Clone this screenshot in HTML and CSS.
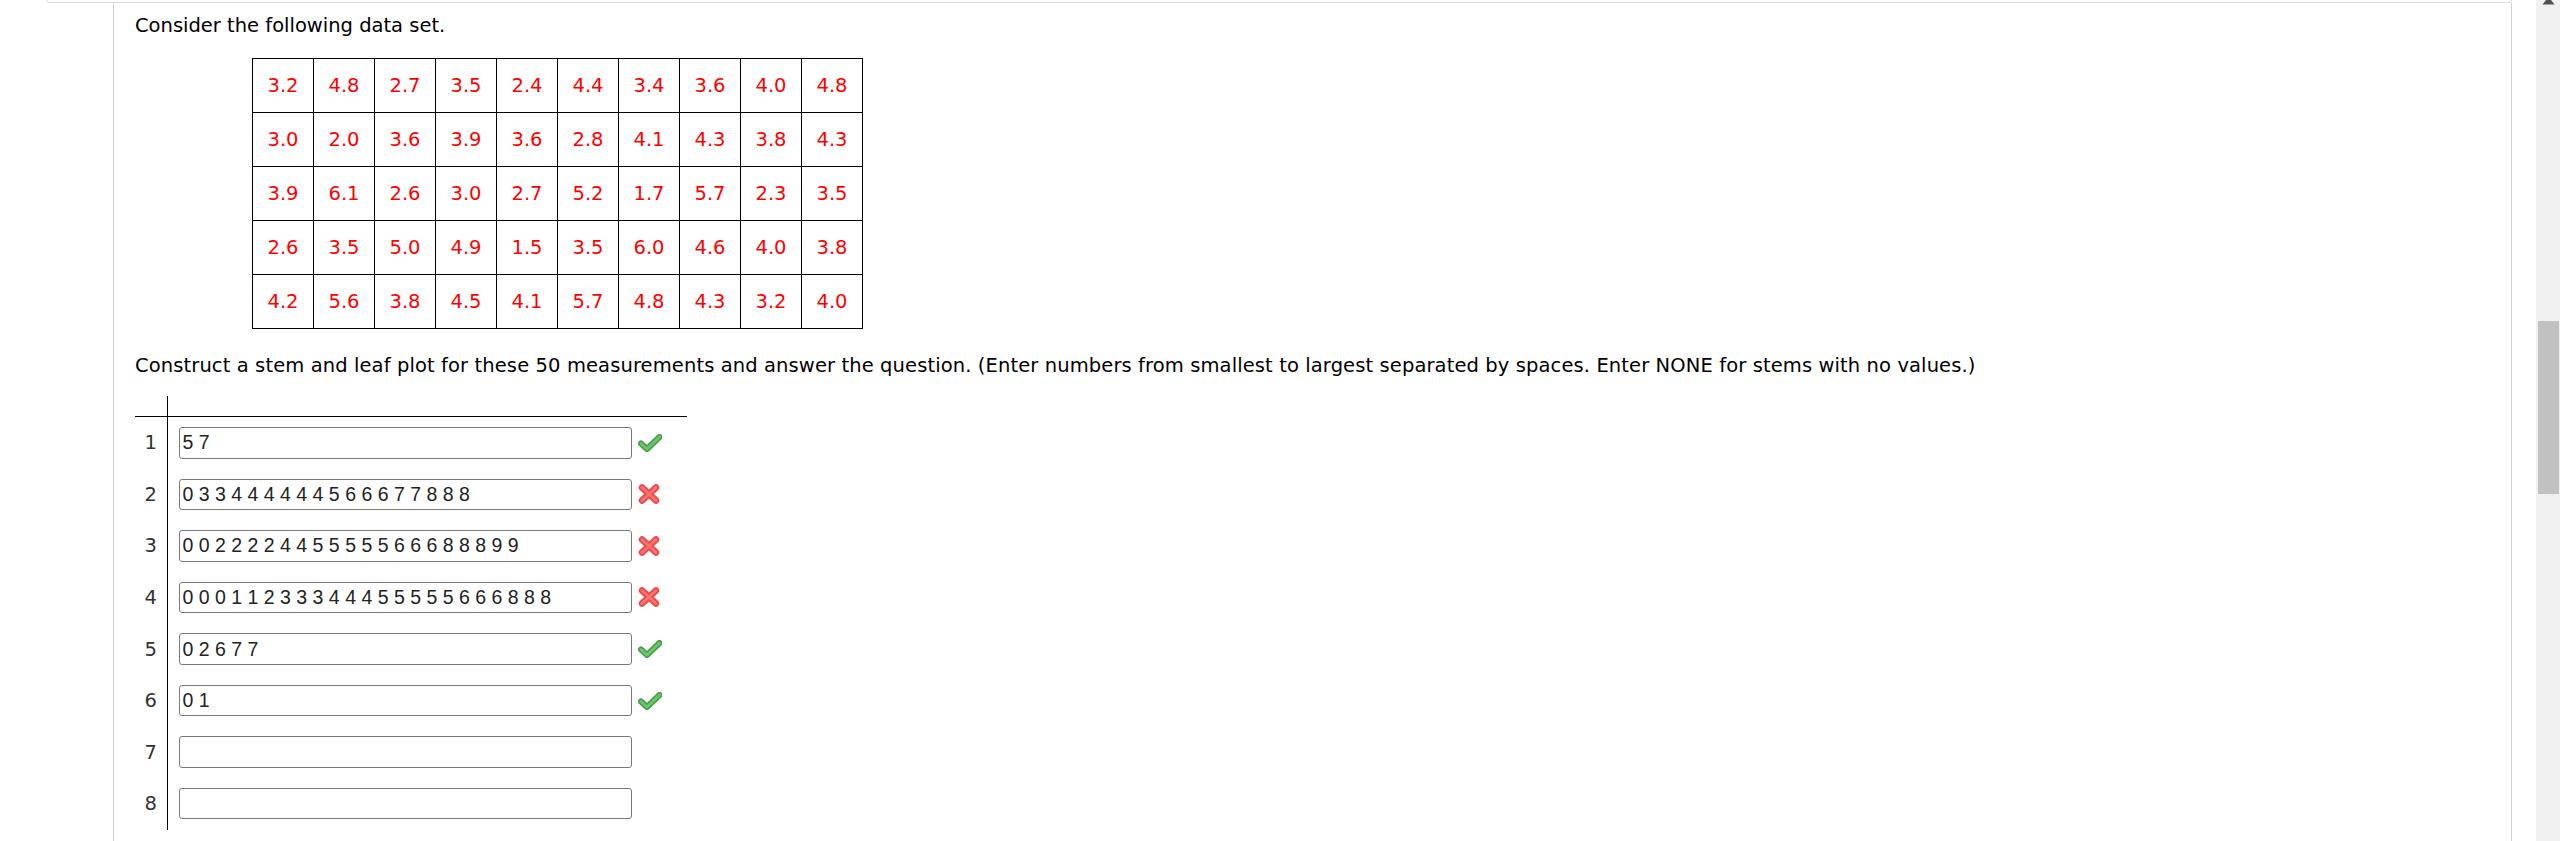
FILE: index.html
```html
<!DOCTYPE html>
<html lang="en">
<head>
<meta charset="utf-8">
<title>Stem and leaf plot</title>
<link rel="stylesheet" href="styles.css">
</head>
<body>
<div class="page">
  <div class="prev-box"></div>
  <div class="question">
    <p class="intro">Consider the following data set.</p>
    <table class="data">
      <tr><td>3.2</td><td>4.8</td><td>2.7</td><td>3.5</td><td>2.4</td><td>4.4</td><td>3.4</td><td>3.6</td><td>4.0</td><td>4.8</td></tr>
      <tr><td>3.0</td><td>2.0</td><td>3.6</td><td>3.9</td><td>3.6</td><td>2.8</td><td>4.1</td><td>4.3</td><td>3.8</td><td>4.3</td></tr>
      <tr><td>3.9</td><td>6.1</td><td>2.6</td><td>3.0</td><td>2.7</td><td>5.2</td><td>1.7</td><td>5.7</td><td>2.3</td><td>3.5</td></tr>
      <tr><td>2.6</td><td>3.5</td><td>5.0</td><td>4.9</td><td>1.5</td><td>3.5</td><td>6.0</td><td>4.6</td><td>4.0</td><td>3.8</td></tr>
      <tr><td>4.2</td><td>5.6</td><td>3.8</td><td>4.5</td><td>4.1</td><td>5.7</td><td>4.8</td><td>4.3</td><td>3.2</td><td>4.0</td></tr>
    </table>
    <p class="instr">Construct a stem and leaf plot for these 50 measurements and answer the question. (Enter numbers from smallest to largest separated by spaces. Enter NONE for stems with no values.)</p>
    <div class="plot">
      <div class="plot-head"><div class="stem"></div><div class="leaf"></div></div>
      <div class="plot-row"><div class="stem">1</div><div class="leaf"><input class="leaf-input" type="text" value="5 7" readonly><svg class="mark" width="24" height="18" viewBox="0 0 24 18"><path d="M3 9.5 L9 15 L21.5 3" class="ok-out"/><path d="M3 9.5 L9 15 L21.5 3" class="ok-in"/></svg></div></div>
      <div class="plot-row"><div class="stem">2</div><div class="leaf"><input class="leaf-input" type="text" value="0 3 3 4 4 4 4 4 4 5 6 6 6 7 7 8 8 8" readonly><svg class="mark" width="22" height="20" viewBox="0 0 22 20"><path d="M4 3.5 L18 16.5 M18 3.5 L4 16.5" class="no-out"/><path d="M4 3.5 L18 16.5 M18 3.5 L4 16.5" class="no-in"/></svg></div></div>
      <div class="plot-row"><div class="stem">3</div><div class="leaf"><input class="leaf-input" type="text" value="0 0 2 2 2 2 4 4 5 5 5 5 5 6 6 6 8 8 8 9 9" readonly><svg class="mark" width="22" height="20" viewBox="0 0 22 20"><path d="M4 3.5 L18 16.5 M18 3.5 L4 16.5" class="no-out"/><path d="M4 3.5 L18 16.5 M18 3.5 L4 16.5" class="no-in"/></svg></div></div>
      <div class="plot-row"><div class="stem">4</div><div class="leaf"><input class="leaf-input" type="text" value="0 0 0 1 1 2 3 3 3 4 4 4 5 5 5 5 5 6 6 6 8 8 8" readonly><svg class="mark" width="22" height="20" viewBox="0 0 22 20"><path d="M4 3.5 L18 16.5 M18 3.5 L4 16.5" class="no-out"/><path d="M4 3.5 L18 16.5 M18 3.5 L4 16.5" class="no-in"/></svg></div></div>
      <div class="plot-row"><div class="stem">5</div><div class="leaf"><input class="leaf-input" type="text" value="0 2 6 7 7" readonly><svg class="mark" width="24" height="18" viewBox="0 0 24 18"><path d="M3 9.5 L9 15 L21.5 3" class="ok-out"/><path d="M3 9.5 L9 15 L21.5 3" class="ok-in"/></svg></div></div>
      <div class="plot-row"><div class="stem">6</div><div class="leaf"><input class="leaf-input" type="text" value="0 1" readonly><svg class="mark" width="24" height="18" viewBox="0 0 24 18"><path d="M3 9.5 L9 15 L21.5 3" class="ok-out"/><path d="M3 9.5 L9 15 L21.5 3" class="ok-in"/></svg></div></div>
      <div class="plot-row"><div class="stem">7</div><div class="leaf"><input class="leaf-input" type="text" value="" readonly></div></div>
      <div class="plot-row"><div class="stem">8</div><div class="leaf"><input class="leaf-input" type="text" value="" readonly></div></div>
    </div>
  </div>
</div>
<div class="scrollbar">
  <svg class="sb-arrow" width="24" height="5" viewBox="0 0 24 5"><polygon points="10,0 15,0 18.5,4.5 6.5,4.5"/></svg>
  <div class="sb-thumb"></div>
</div>
</body>
</html>
```

FILE: styles.css
```css
html, body {
  margin: 0;
  padding: 0;
  background: #fff;
}
body {
  display: flex;
  height: 841px;
  overflow: hidden;
  font-family: "DejaVu Sans", Verdana, sans-serif;
  font-size: 19.5px;
  color: #000;
}
.page {
  flex: 1;
  display: flex;
  flex-direction: column;
  min-width: 0;
}
.prev-box {
  height: 2px;
  margin: 0 24px 0 46px;
  border: 1px solid #dcdcdc;
  border-top: none;
  border-radius: 0 0 5px 5px;
}
.question {
  flex: 1;
  margin: 0 24px 0 113px;
  border-left: 1px solid #d0d0d0;
  border-right: 1px solid #d0d0d0;
  padding: 11px 0 0 21px;
}
.intro, .instr {
  margin: 0;
  line-height: normal;
}
.instr {
  letter-spacing: 0.11px;
}
.data {
  margin: 21px 0 0 117px;
  border-collapse: collapse;
}
.data td {
  border: 1px solid #000;
  width: 61px;
  height: 54px;
  padding: 0;
  text-align: center;
  vertical-align: middle;
  color: #ff0000;
  box-sizing: border-box;
}
.instr {
  margin-top: 25px;
}
.plot {
  width: 552px;
  margin-top: 19px;
}
.plot-head {
  display: flex;
  height: 20px;
  border-bottom: 1px solid #000;
}
.plot-row {
  display: flex;
  height: 51.57px;
}
.stem {
  width: 33px;
  box-sizing: border-box;
  border-right: 1px solid #000;
  padding-right: 10px;
  text-align: right;
  color: #333;
  display: flex;
  align-items: center;
  justify-content: flex-end;
}
.leaf {
  flex: 1;
  display: flex;
  align-items: center;
  padding-left: 10.5px;
}
.leaf-input {
  width: 453px;
  height: 31.5px;
  box-sizing: border-box;
  margin: 0;
  padding: 0 3px;
  border: 1px solid #7a7a7a;
  border-radius: 3px;
  font-family: "Liberation Sans", Arial, sans-serif;
  font-size: 19.5px;
  color: #222;
  background: #fff;
  outline: none;
}
.mark {
  margin-left: 6.5px;
  flex: none;
}
.ok-out {
  fill: none;
  stroke: #47a047;
  stroke-width: 6;
  stroke-linecap: round;
  stroke-linejoin: round;
}
.ok-in {
  fill: none;
  stroke: #6cc46c;
  stroke-width: 3;
  stroke-linecap: round;
  stroke-linejoin: round;
}
.no-out {
  fill: none;
  stroke: #ea4a4a;
  stroke-width: 6.5;
  stroke-linecap: round;
}
.no-in {
  fill: none;
  stroke: #ff7070;
  stroke-width: 3;
  stroke-linecap: round;
}
.scrollbar {
  width: 24px;
  flex: none;
  background: #f0f0f0;
  display: flex;
  flex-direction: column;
}
.sb-arrow {
  display: block;
  fill: #505050;
}
.sb-thumb {
  margin: 316px 1px 0 2px;
  height: 173px;
  background: #c1c1c1;
}
```
